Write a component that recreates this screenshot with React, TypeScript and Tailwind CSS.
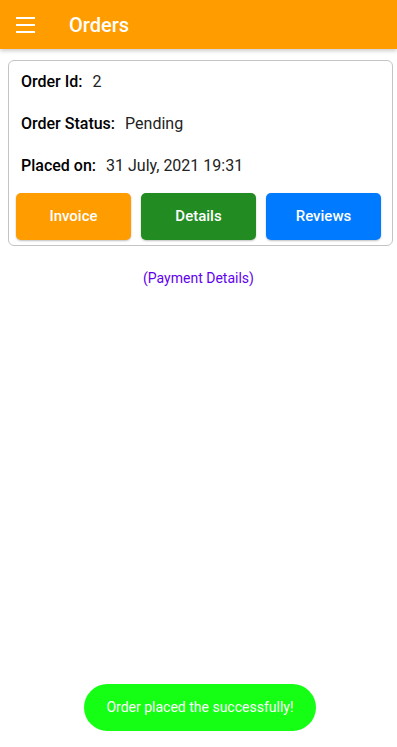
import React from 'react';

const ORANGE = '#FF9C00';

function Row({ label, value }: { label: string; value: string }) {
  return (
    <div className="flex h-[42px] items-center pl-[12px] text-[16px]">
      <span className="font-medium text-black">{label}</span>
      <span className="ml-[10px] text-[#222]">{value}</span>
    </div>
  );
}

export default function App() {
  return (
    <div className="relative h-[747px] w-full overflow-hidden bg-white" style={{ fontFamily: 'Roboto, "Noto Sans", sans-serif' }}>
      <header className="flex h-[49px] items-center bg-[#FF9C00] shadow-[0_2px_4px_rgba(0,0,0,0.2)]">
        <button className="ml-[16px] flex h-[16px] w-[19px] flex-col justify-between" aria-label="menu">
          <span className="block h-[2px] w-full bg-white" />
          <span className="block h-[2px] w-full bg-white" />
          <span className="block h-[2px] w-full bg-white" />
        </button>
        <h1 className="ml-[34px] text-[20px] font-medium text-white">Orders</h1>
      </header>

      <div className="mx-[8px] mt-[11px] mr-[4px] rounded-[6px] border border-[#c4c4c4] pb-[5px]">
        <Row label="Order Id:" value="2" />
        <Row label="Order Status:" value="Pending" />
        <Row label="Placed on:" value="31 July, 2021 19:31" />
        <div className="mt-[6px] flex gap-[10px] pl-[7px] pr-[11px]">
          <button className="h-[47px] flex-1 rounded-[5px] text-[15px] font-medium text-white shadow-[0_1px_2px_rgba(0,0,0,0.25)]" style={{ backgroundColor: ORANGE }}>
            Invoice
          </button>
          <button className="h-[47px] flex-1 rounded-[5px] bg-[#228B22] text-[15px] font-medium text-white shadow-[0_1px_2px_rgba(0,0,0,0.25)]">
            Details
          </button>
          <button className="h-[47px] flex-1 rounded-[5px] bg-[#007BFF] text-[15px] font-medium text-white shadow-[0_1px_2px_rgba(0,0,0,0.25)]">
            Reviews
          </button>
        </div>
      </div>

      <div className="mt-[22px] text-center text-[14px] text-[#6200EE]">(Payment Details)</div>

      <div className="absolute bottom-[16px] left-[84px] flex h-[47px] w-[232px] items-center justify-center rounded-full bg-[#14FF14] text-[14px] text-white">
        Order placed the successfully!
      </div>
    </div>
  );
}
